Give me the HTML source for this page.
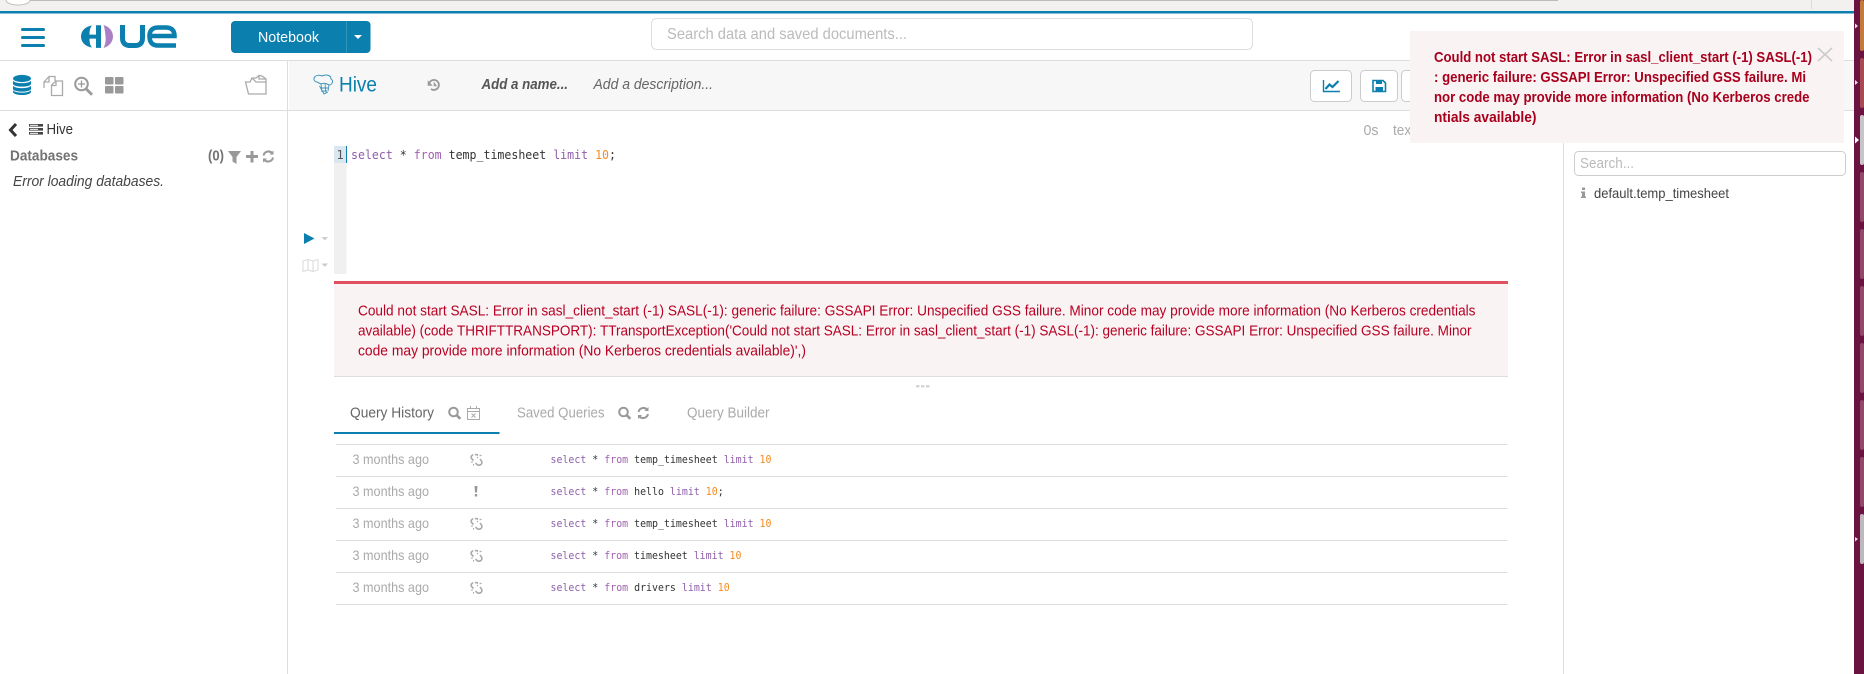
<!DOCTYPE html>
<html><head><meta charset="utf-8"><title>Hue</title>
<style>
html,body{margin:0;padding:0;background:#fff;width:1864px;height:674px;overflow:hidden}
svg{display:block;font-family:"Liberation Sans",sans-serif;font-size:15px}
text{white-space:pre}
.m{font-family:"DejaVu Sans Mono","Liberation Mono",monospace}
</style></head><body>
<svg xmlns="http://www.w3.org/2000/svg" width="1864" height="674" viewBox="0 0 1864 674">
<defs>
<g id="unlink" fill="none" stroke="#aaa" stroke-width="1.6">
<path d="M3 1.5 L1.5 3 Q0.5 4.5 2 6 L3.5 7.5"/><path d="M5 2 Q6.5 1 8 2.5"/><path d="M10 6 L11.5 8 Q12.5 10 11 11.5 Q9 13 7 11.5 L5.5 10"/><path d="M8 5 L7 4" stroke-width="1"/><path d="M1 9 L3 9 M3.5 11 L3.5 12.5 M9.5 3 L11.5 2" stroke-width="1"/>
</g>
<g id="srch" fill="none" stroke="#999" stroke-width="2"><circle cx="5.5" cy="5.5" r="4.3"/><path d="M8.7 8.7 L12.3 12.3" stroke-width="2.6"/></g>
<g id="refr" fill="none" stroke="#999" stroke-width="2"><path d="M1.5 5.5 A5 5 0 0 1 10 3"/><path d="M11 7.5 A5 5 0 0 1 2.5 10"/><path d="M11.5 0.5 V4.5 H7.5 Z M1 12.5 V8.5 H5 Z" fill="#999" stroke="none"/></g>
</defs>

<!-- browser strip -->
<rect x="0" y="0" width="1854" height="11" fill="#f2f1ef"/>
<rect x="30" y="0" width="1528" height="1" fill="#bdbcb8"/>
<path d="M6 0 A12 5 0 0 0 30 0" fill="#fff" stroke="#bdbcb8"/>
<rect x="1811" y="0" width="1" height="9" fill="#dcdbd8"/>
<rect x="0" y="11" width="1854" height="2.5" fill="#0b7fad"/>

<!-- header -->
<rect x="21" y="28" width="24" height="3" rx="1.5" fill="#0b7fad"/>
<rect x="21" y="36" width="24" height="3" rx="1.5" fill="#0b7fad"/>
<rect x="21" y="44" width="24" height="3" rx="1.5" fill="#0b7fad"/>

<!-- logo -->
<path d="M92 25.4 C85 26.6 81 31 81 36.5 C81 42 85 46.5 92 47.6 C90 45 89.5 42 89.5 38.6 H96 V47.9 H101 V25.2 H96 V34.6 H89.5 C89.5 31 90 28 92 25.4 Z" fill="#0b7fad"/>
<path d="M103.5 25 C109 26.5 113 31 113 36.5 C113 42 109 46.5 103.5 48 C105.5 44 106 40 105.5 36.5 C105 32 105 29 103.5 25 Z" fill="#a97fc6"/>
<path d="M122.5 25 V38 C122.5 43 125 45.5 130 45.5 H135 C140 45.5 142.5 43 142.5 38 V25" fill="none" stroke="#0b7fad" stroke-width="5"/>
<path d="M149.5 36 H174.5 C174.5 30 171 27.5 166 27.5 H158 C152 27.5 149.5 31 149.5 36 C149.5 42 152 45.5 158 45.5 H176" fill="none" stroke="#0b7fad" stroke-width="4.6"/>

<!-- notebook button -->
<rect x="231" y="21" width="139.5" height="32" rx="4" fill="#0b7fad"/>
<rect x="346" y="21" width="1" height="32" fill="#2f93ba"/>
<text x="258" y="42" fill="#fff" font-size="15" textLength="61" lengthAdjust="spacingAndGlyphs">Notebook</text>
<path d="M354 35 H362 L358 39 Z" fill="#fff"/>

<!-- search -->
<rect x="651.5" y="18.5" width="601" height="31" rx="5" fill="#fff" stroke="#ddd"/>
<text x="667" y="39" fill="#bbb" font-size="16" textLength="240" lengthAdjust="spacingAndGlyphs">Search data and saved documents...</text>

<!-- frame lines -->
<rect x="289" y="61" width="1565" height="49" fill="#f7f7f7"/>
<rect x="0" y="60" width="1854" height="1" fill="#ddd"/>
<rect x="0" y="110" width="1854" height="1" fill="#ddd"/>
<rect x="287" y="61" width="1" height="613" fill="#ddd"/>
<rect x="1563" y="110" width="1" height="564" fill="#ddd"/>

<!-- left assist icons -->
<g fill="#0b7fad">
<ellipse cx="22" cy="78.5" rx="9" ry="3.6"/>
<path d="M13 80.5 C14 84 30 84 31 80.5 V84 C30 87.5 14 87.5 13 84 Z"/>
<path d="M13 85.5 C14 89 30 89 31 85.5 V89 C30 92.5 14 92.5 13 89 Z"/>
<path d="M13 90 C14 93.5 30 93.5 31 90 V92 C30 96 14 96 13 92 Z"/>
</g>
<g fill="none" stroke="#aaa" stroke-width="1.3">
<path d="M44 88 V82 L49 76.5 H55 V81"/><path d="M49 76.5 V82 H44"/>
<path d="M51.5 95.5 V85 L56 81 H62.5 V95.5 Z"/><path d="M56 81 V85.5 H51.5"/>
<circle cx="81.5" cy="84" r="6.3" stroke-width="2" stroke="#999"/>
<path d="M86 88.7 L92 94.7" stroke-width="2.8" stroke="#999"/>
<path d="M78 84 H85 M81.5 80.5 V87.5" stroke-width="1.3" stroke="#999"/>
<path d="M245.5 82 H250 L252 78 H256 L259 75.5 L262 76 L266 79 V94 H248.5 Z"/><path d="M252 78 L256 82 H266 M259 75.5 V79 H266"/>
</g>
<g fill="#999">
<rect x="105" y="77" width="8.5" height="7.5" rx="1"/><rect x="115" y="77" width="8.5" height="7.5" rx="1"/>
<rect x="105" y="86" width="8.5" height="7.5" rx="1"/><rect x="115" y="86" width="8.5" height="7.5" rx="1"/>
</g>

<!-- left panel -->
<path d="M16 124 L10.5 130 L16 136" fill="none" stroke="#333" stroke-width="3"/>
<g fill="#444"><rect x="29" y="124" width="14" height="2.6"/><rect x="29" y="128" width="14" height="2.6"/><rect x="29" y="132" width="14" height="2.6"/></g>
<g fill="#fff"><rect x="30" y="124.8" width="8" height="1"/><rect x="30" y="128.8" width="8" height="1"/><rect x="30" y="132.8" width="8" height="1"/></g>
<text x="46.5" y="134" fill="#333" font-size="15" textLength="26.5" lengthAdjust="spacingAndGlyphs">Hive</text>
<text x="10" y="160.5" fill="#737373" font-size="15" font-weight="700" textLength="68" lengthAdjust="spacingAndGlyphs">Databases</text>
<text x="208" y="160.5" fill="#737373" font-size="15" font-weight="700" textLength="16" lengthAdjust="spacingAndGlyphs">(0)</text>
<path d="M228 151 H241 L236.5 157 V164 L232.5 161.5 V157 Z" fill="#999"/>
<path d="M250.5 151 H253.5 V155 H258 V158 H253.5 V162.5 H250.5 V158 H246 V155 H250.5 Z" fill="#999"/>
<use href="#refr" x="262" y="150"/>
<text x="13" y="186" fill="#444" font-size="15" font-style="italic" textLength="151" lengthAdjust="spacingAndGlyphs">Error loading databases.</text>

<!-- toolbar -->
<g fill="none" stroke="#3a93b8" stroke-width="1">
<path d="M314 78 C316 74.5 320 75 322 76 C326 74 331 75 331 79 C334 81 332 85 329 85 L327 84 C325 83 323 83 321 84 L317 82 C315 82 313.5 80 314 78 Z"/>
<path d="M321 84 L322 92 M325 84 L326 93 M329 85 L328 91 M319.5 86 L324 94 L328 92 M321 88 H328 M322 91 H327" stroke-width="0.9"/>
</g>
<text x="339" y="91.5" fill="#0b7fad" font-size="21" textLength="38" lengthAdjust="spacingAndGlyphs">Hive</text>
<path d="M429 84 A5 5 0 1 1 431 89" fill="none" stroke="#999" stroke-width="1.8"/>
<path d="M428 81 V85.5 H432 Z M434 82 V86 H437" fill="#999" stroke="#999" stroke-width="0.6"/>
<text x="481.5" y="89" fill="#555" font-size="15" font-weight="700" font-style="italic" textLength="86.5" lengthAdjust="spacingAndGlyphs">Add a name...</text>
<text x="593.5" y="89" fill="#666" font-size="15" font-style="italic" textLength="119.5" lengthAdjust="spacingAndGlyphs">Add a description...</text>
<rect x="1310.5" y="70.5" width="41" height="31" rx="4" fill="#fff" stroke="#ccc"/>
<path d="M1323.5 80 V91.5 H1340" fill="none" stroke="#0b7fad" stroke-width="1.4"/>
<path d="M1325.5 89 L1329.5 84.5 L1332.5 87 L1338.5 81" fill="none" stroke="#0b7fad" stroke-width="2.2"/>
<rect x="1360.5" y="70.5" width="37" height="31" rx="4" fill="#fff" stroke="#ccc"/>
<path d="M1373 80.5 H1383 L1385.5 83 V91.5 H1373 Z" fill="none" stroke="#0b7fad" stroke-width="1.6"/>
<rect x="1376" y="80.5" width="6" height="3.5" fill="#0b7fad"/><rect x="1375.5" y="87" width="7.5" height="4.5" fill="#0b7fad"/>
<rect x="1401.5" y="70.5" width="37" height="31" rx="4" fill="#fff" stroke="#ccc"/>

<!-- status -->
<text x="1363.5" y="135" fill="#aaa" font-size="15" textLength="15" lengthAdjust="spacingAndGlyphs">0s</text>
<text x="1393" y="135" fill="#aaa" font-size="15" textLength="22" lengthAdjust="spacingAndGlyphs">text</text>

<!-- editor -->
<rect x="334" y="146" width="12.5" height="128" fill="#f0f0f0"/>
<rect x="334" y="146" width="12.5" height="17" fill="#dbe7f0"/>
<rect x="346" y="146" width="1" height="17" fill="#0b7fad"/>
<text x="336.5" y="159" class="m" font-size="12" fill="#555">1</text>
<text x="351" y="159" class="m" font-size="12.6" fill="#333" textLength="265" lengthAdjust="spacingAndGlyphs"><tspan fill="#8f5fa8">select</tspan> * <tspan fill="#a060b0">from</tspan> temp_timesheet <tspan fill="#8f5fa8">limit</tspan> <tspan fill="#f58b21">10</tspan>;</text>

<path d="M304 233 L314.5 238.5 L304 244 Z" fill="#0b7fad"/>
<path d="M321.5 237 H328 L324.7 240.5 Z" fill="#ccc"/>
<path d="M303 261 L308 259.5 L313 261 L318 259.5 V270 L313 271.5 L308 270 L303 271.5 Z M308 259.5 V270 M313 261 V271.5" fill="none" stroke="#ddd" stroke-width="1.1"/>
<path d="M321.5 263.5 H328 L324.7 267 Z" fill="#ccc"/>

<!-- error box -->
<rect x="334" y="281" width="1174" height="96" fill="#f9f3f4"/>
<rect x="334" y="281" width="1174" height="3" fill="#e0505f"/>
<rect x="334" y="376" width="1174" height="1" fill="#ddd"/>
<g fill="#b80022">
<text x="358" y="315.5" font-size="15" textLength="1117.5" lengthAdjust="spacingAndGlyphs">Could not start SASL: Error in sasl_client_start (-1) SASL(-1): generic failure: GSSAPI Error: Unspecified GSS failure. Minor code may provide more information (No Kerberos credentials</text>
<text x="358" y="335.5" font-size="15" textLength="1113.5" lengthAdjust="spacingAndGlyphs">available) (code THRIFTTRANSPORT): TTransportException('Could not start SASL: Error in sasl_client_start (-1) SASL(-1): generic failure: GSSAPI Error: Unspecified GSS failure. Minor</text>
<text x="358" y="355.5" font-size="15" textLength="448" lengthAdjust="spacingAndGlyphs">code may provide more information (No Kerberos credentials available)',)</text>
</g>
<g fill="#d6d6d6"><rect x="916" y="385" width="3.5" height="2.5"/><rect x="921" y="385" width="3.5" height="2.5"/><rect x="926" y="385" width="3.5" height="2.5"/></g>

<!-- tabs -->
<text x="350" y="417.5" fill="#666" font-size="15" textLength="84" lengthAdjust="spacingAndGlyphs">Query History</text>
<use href="#srch" x="448" y="406.5"/>
<g fill="none" stroke="#aaa" stroke-width="1"><rect x="467.5" y="408.5" width="12" height="11"/><path d="M467.5 411.5 H479.5 M470.5 406 V409 M476.5 406 V409 M471.5 413.5 L475.5 417.5 M475.5 413.5 L471.5 417.5"/></g>
<text x="517" y="417.5" fill="#aaa" font-size="15" textLength="87.5" lengthAdjust="spacingAndGlyphs">Saved Queries</text>
<use href="#srch" x="618" y="406.5"/>
<use href="#refr" x="637" y="406.5"/>
<text x="687" y="417.5" fill="#aaa" font-size="15" textLength="82.5" lengthAdjust="spacingAndGlyphs">Query Builder</text>
<rect x="334" y="432" width="165.5" height="2" fill="#0b7fad"/>

<!-- history table -->
<g fill="#ddd">
<rect x="336" y="444" width="1171" height="1"/><rect x="336" y="476" width="1171" height="1"/><rect x="336" y="508" width="1171" height="1"/><rect x="336" y="540" width="1171" height="1"/><rect x="336" y="572" width="1171" height="1"/><rect x="336" y="604" width="1171" height="1"/>
</g>
<g fill="#aaa">
<text x="352.5" y="464" font-size="14" textLength="76.5" lengthAdjust="spacingAndGlyphs">3 months ago</text>
<text x="352.5" y="496" font-size="14" textLength="76.5" lengthAdjust="spacingAndGlyphs">3 months ago</text>
<text x="352.5" y="528" font-size="14" textLength="76.5" lengthAdjust="spacingAndGlyphs">3 months ago</text>
<text x="352.5" y="560" font-size="14" textLength="76.5" lengthAdjust="spacingAndGlyphs">3 months ago</text>
<text x="352.5" y="592" font-size="14" textLength="76.5" lengthAdjust="spacingAndGlyphs">3 months ago</text>
</g>
<use href="#unlink" x="470" y="453"/>
<path d="M474.5 486 H477.5 L477 492.5 H475 Z M474.8 494 H477.2 V496.5 H474.8 Z" fill="#999"/>
<use href="#unlink" x="470" y="517"/>
<use href="#unlink" x="470" y="549"/>
<use href="#unlink" x="470" y="581"/>
<g fill="#333">
<text class="m" font-size="10.8" x="550.5" y="463" textLength="221" lengthAdjust="spacingAndGlyphs"><tspan fill="#8f5fa8">select</tspan> * <tspan fill="#a060b0">from</tspan> temp_timesheet <tspan fill="#8f5fa8">limit</tspan> <tspan fill="#f58b21">10</tspan></text>
<text class="m" font-size="10.8" x="550.5" y="495" textLength="173.2" lengthAdjust="spacingAndGlyphs"><tspan fill="#8f5fa8">select</tspan> * <tspan fill="#a060b0">from</tspan> hello <tspan fill="#8f5fa8">limit</tspan> <tspan fill="#f58b21">10</tspan>;</text>
<text class="m" font-size="10.8" x="550.5" y="527" textLength="221" lengthAdjust="spacingAndGlyphs"><tspan fill="#8f5fa8">select</tspan> * <tspan fill="#a060b0">from</tspan> temp_timesheet <tspan fill="#8f5fa8">limit</tspan> <tspan fill="#f58b21">10</tspan></text>
<text class="m" font-size="10.8" x="550.5" y="559" textLength="191" lengthAdjust="spacingAndGlyphs"><tspan fill="#8f5fa8">select</tspan> * <tspan fill="#a060b0">from</tspan> timesheet <tspan fill="#8f5fa8">limit</tspan> <tspan fill="#f58b21">10</tspan></text>
<text class="m" font-size="10.8" x="550.5" y="591" textLength="179.2" lengthAdjust="spacingAndGlyphs"><tspan fill="#8f5fa8">select</tspan> * <tspan fill="#a060b0">from</tspan> drivers <tspan fill="#8f5fa8">limit</tspan> <tspan fill="#f58b21">10</tspan></text>
</g>

<!-- right panel -->
<rect x="1574.5" y="151.5" width="271" height="24" rx="4" fill="#fff" stroke="#ccc"/>
<text x="1580" y="168" fill="#bbb" font-size="15" textLength="54" lengthAdjust="spacingAndGlyphs">Search...</text>
<path d="M1582 187.5 H1585 V190 H1582 Z M1581 191.5 H1585 V196.5 H1586 V198 H1581 V196.5 H1582 V193 H1581 Z" fill="#999"/>
<text x="1594" y="198" fill="#444" font-size="14" textLength="135" lengthAdjust="spacingAndGlyphs">default.temp_timesheet</text>

<!-- toast -->
<rect x="1410" y="31" width="434" height="112" fill="#f9f3f4"/>
<g fill="#a8001c" font-weight="700" font-size="15">
<text x="1434" y="62" textLength="378" lengthAdjust="spacingAndGlyphs">Could not start SASL: Error in sasl_client_start (-1) SASL(-1)</text>
<text x="1434" y="82" textLength="372" lengthAdjust="spacingAndGlyphs">: generic failure: GSSAPI Error: Unspecified GSS failure. Mi</text>
<text x="1434" y="102" textLength="375.5" lengthAdjust="spacingAndGlyphs">nor code may provide more information (No Kerberos crede</text>
<text x="1434" y="122" textLength="102.5" lengthAdjust="spacingAndGlyphs">ntials available)</text>
</g>
<path d="M1818 48 L1832 61 M1832 48 L1818 61" stroke="#ccc" stroke-width="1.6" fill="none"/>

<!-- launcher dock -->
<rect x="1854" y="0" width="10" height="674" fill="#6a1340"/>
<rect x="1860" y="0" width="4" height="51" rx="2" fill="#c47a3a"/>
<rect x="1860" y="58" width="4" height="50" rx="2" fill="#a84a52"/>
<rect x="1860" y="115" width="4" height="50" rx="2" fill="#c9c5c7"/>
<rect x="1860" y="172" width="4" height="50" rx="2" fill="#8f4a68"/>
<rect x="1860" y="229" width="4" height="50" rx="2" fill="#8f4a68"/>
<rect x="1860" y="286" width="4" height="50" rx="2" fill="#8f4a68"/>
<rect x="1860" y="343" width="4" height="50" rx="2" fill="#8f4a68"/>
<rect x="1860" y="400" width="4" height="50" rx="2" fill="#8f4a68"/>
<rect x="1860" y="457" width="4" height="50" rx="2" fill="#8f4a68"/>
<rect x="1860" y="514" width="4" height="50" rx="2" fill="#bdb8ba"/>
<g fill="#e8dfe4"><path d="M1855 23.5 L1858 26 L1855 28.5 Z M1855 80 L1858 82.5 L1855 85 Z M1855 537 L1858 539 L1855 541.5 Z"/><path d="M1855 136.5 L1859 140 L1855 143.5 Z" fill="#fff"/></g>
</svg>
</body></html>
